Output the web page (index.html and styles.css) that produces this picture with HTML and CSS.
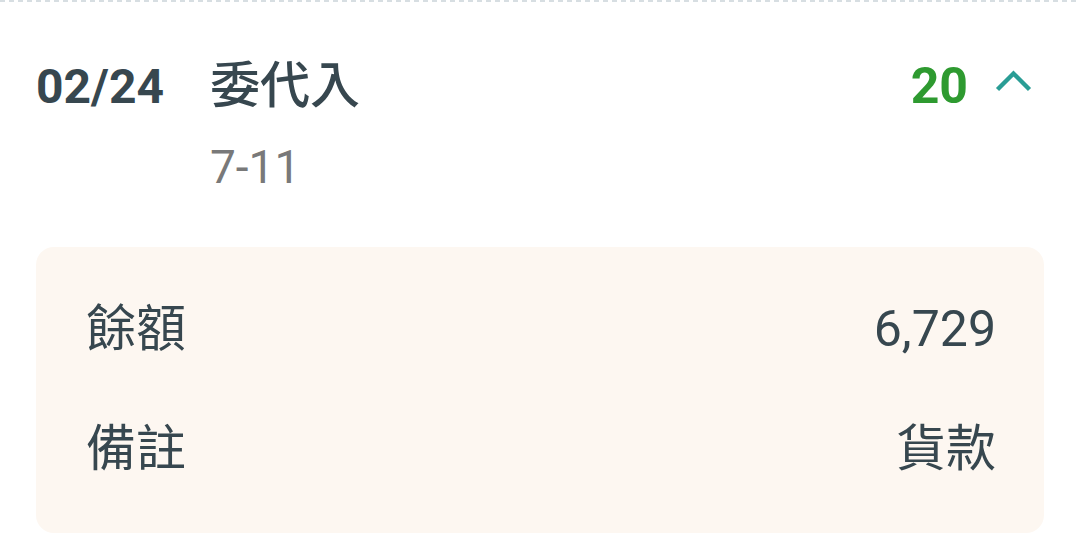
FILE: index.html
```html
<!DOCTYPE html>
<html lang="zh-Hant">
<head>
<meta charset="utf-8">
<link rel="stylesheet" href="styles.css">
</head>
<body>
<div class="divider"></div>
<div class="entry">
  <div class="date">02/24</div>
  <div class="info">
    <div class="title-row">
      <div class="title">委代入</div>
      <div class="right">
        <span class="amount">20</span>
        <svg class="chev" width="37" height="22" viewBox="0 0 37 22"><polyline points="2.5,19.5 18.5,3.5 34.5,19.5" fill="none" stroke="#2a9d95" stroke-width="4.4"/></svg>
      </div>
    </div>
    <div class="sub">7-11</div>
  </div>
</div>
<div class="card">
  <div class="row"><span class="label">餘額</span><span class="value">6,729</span></div>
  <div class="row"><span class="label">備註</span><span class="value">貨款</span></div>
</div>
</body>
</html>
```
FILE: styles.css
```css
html, body {
  margin: 0;
  padding: 0;
  background: #ffffff;
}
body {
  width: 1080px;
  height: 539px;
  overflow: hidden;
  font-family: Roboto, "Noto Sans CJK TC", sans-serif;
  color: #37474f;
}
.divider {
  height: 2px;
  background: repeating-linear-gradient(90deg, #d7dee2 0 5px, transparent 5px 9px);
}
.entry {
  display: flex;
  align-items: baseline;
  padding: 0 36px;
  margin-top: 52px;
}
.date {
  width: 174px;
  flex: none;
  font-size: 48px;
  font-weight: 700;
  line-height: 64px;
}
.info {
  flex: 1;
}
.title-row {
  display: flex;
  align-items: baseline;
  justify-content: space-between;
}
.title {
  font-size: 50px;
  font-weight: 500;
  line-height: 64px;
}
.right {
  display: flex;
  align-items: flex-start;
}
.amount {
  font-size: 50px;
  font-weight: 700;
  line-height: 64px;
  color: #2e9a30;
}
.chev {
  display: block;
  margin: 16px 12px 0 27px;
}
.sub {
  margin-top: 17px;
  font-size: 46px;
  line-height: 64px;
  color: #797979;
}
.card {
  margin: 48px 36px 0;
  padding: 22px 48px 24px 50px;
  background: #fdf7f1;
  border-radius: 18px;
}
.row {
  display: flex;
  justify-content: space-between;
  font-size: 50px;
  line-height: 120px;
}
```
